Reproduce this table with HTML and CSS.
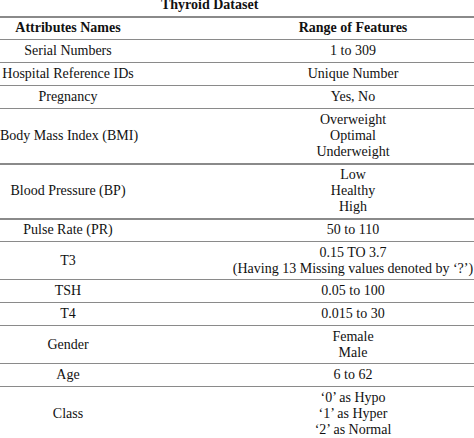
FILE: index.html
```html
<!DOCTYPE html>
<html>
<head>
<meta charset="utf-8">
<link rel="stylesheet" href="styles.css">
</head>
<body>
<div class="title">Thyroid Dataset</div>
<div class="data">
  <div class="row head thick"><div class="name">Attributes Names</div><div class="range">Range of Features</div></div>
  <div class="row"><div class="name">Serial Numbers</div><div class="range">1 to 309</div></div>
  <div class="row"><div class="name">Hospital Reference IDs</div><div class="range">Unique Number</div></div>
  <div class="row"><div class="name">Pregnancy</div><div class="range">Yes, No</div></div>
  <div class="row"><div class="name">Body Mass Index (BMI)</div><div class="range">Overweight<br>Optimal<br>Underweight</div></div>
  <div class="row thick"><div class="name">Blood Pressure (BP)</div><div class="range">Low<br>Healthy<br>High</div></div>
  <div class="row thick"><div class="name">Pulse Rate (PR)</div><div class="range">50 to 110</div></div>
  <div class="row short"><div class="name">T3</div><div class="range">0.15 TO 3.7<br>(Having 13 Missing values denoted by ‘?’)</div></div>
  <div class="row"><div class="name">TSH</div><div class="range">0.05 to 100</div></div>
  <div class="row"><div class="name">T4</div><div class="range">0.015 to 30</div></div>
  <div class="row short"><div class="name">Gender</div><div class="range">Female<br>Male</div></div>
  <div class="row"><div class="name">Age</div><div class="range">6 to 62</div></div>
  <div class="row"><div class="name">Class</div><div class="range">‘0’ as Hypo<br>‘1’ as Hyper<br>‘2’ as Normal</div></div>
</div>
</body>
</html>
```
FILE: styles.css
```css
html, body {
  margin: 0;
  padding: 0;
  background: #fff;
}
body {
  font-family: "Liberation Serif", "Times New Roman", serif;
  font-size: 14px;
  color: #111;
  width: 474px;
  overflow: hidden;
}
.title {
  font-weight: bold;
  padding-left: 161px;
  margin-top: -3px;
  height: 19px;
  line-height: 16px;
}
.data {
  width: 474px;
}
.row {
  display: grid;
  grid-template-columns: 136px 96px 242px;
  align-items: center;
  border-top: 1px solid #8a8a8a;
  padding: 3px 0;
  line-height: 16px;
  text-align: center;
  white-space: nowrap;
}
.row.thick {
  border-top-width: 2px;
  padding-top: 2px;
}
.row.short {
  padding-bottom: 2px;
}
.name {
  grid-column: 1;
}
.range {
  grid-column: 3;
  justify-self: center;
}
.head {
  font-weight: bold;
}
```
